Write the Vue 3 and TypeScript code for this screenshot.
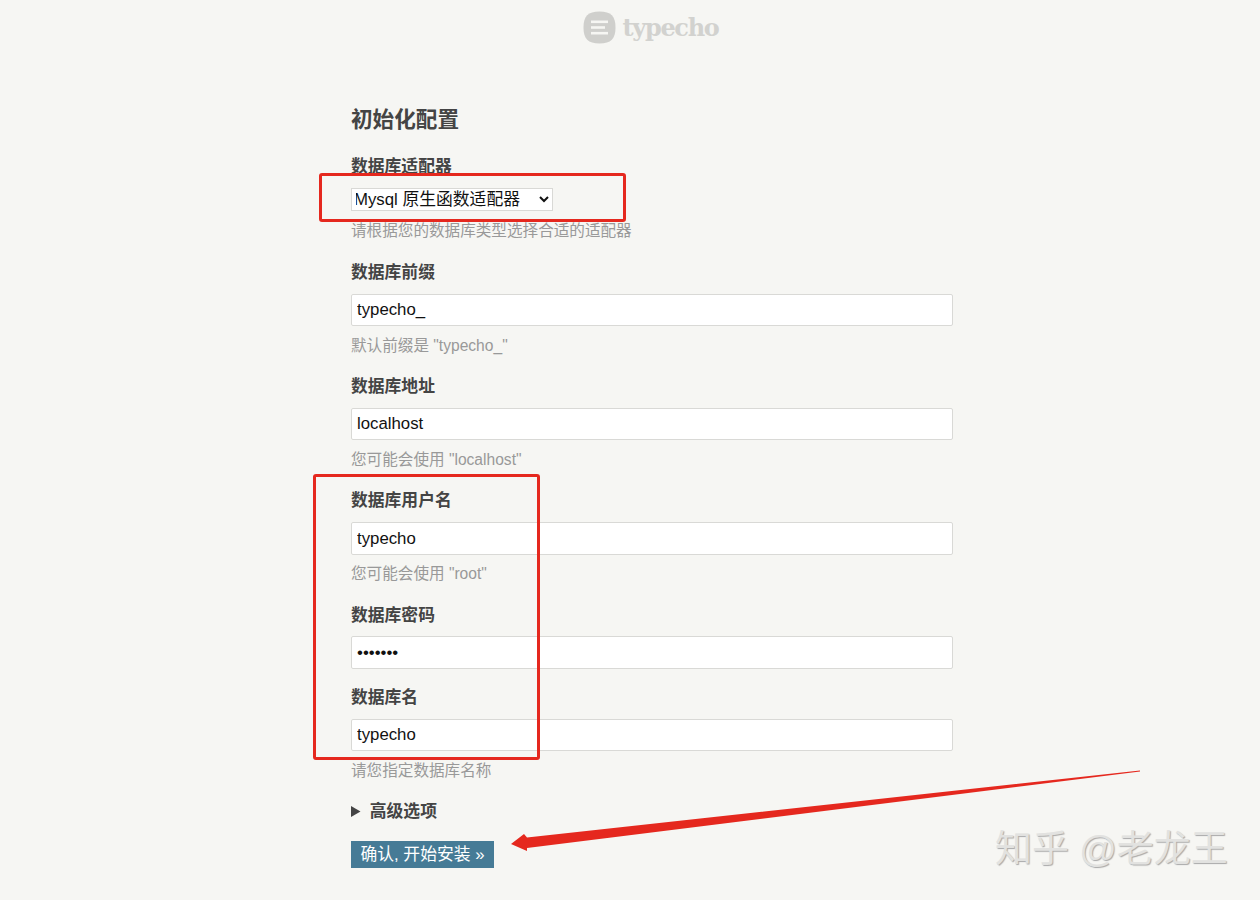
<template>
  <div class="install-page">
    <header class="logo">
      <svg class="logo-icon" width="33" height="33" viewBox="0 0 33 33">
        <path d="M16.5 0.5C28 0.5 32.5 5 32.5 16.5S28 32.5 16.5 32.5S0.5 28 0.5 16.5S5 0.5 16.5 0.5Z" fill="#cfcfcc" />
        <rect x="8" y="9.5" width="17" height="2.6" fill="#f6f6f3" />
        <rect x="8" y="15.2" width="14" height="2.6" fill="#f6f6f3" />
        <rect x="8" y="20.9" width="17" height="2.6" fill="#f6f6f3" />
      </svg>
      <span class="logo-text">typecho</span>
    </header>

    <form class="form" @submit.prevent>
      <h1>初始化配置</h1>

      <div class="field first">
        <label>数据库适配器</label>
        <select v-model="adapter">
          <option>Mysql 原生函数适配器</option>
        </select>
        <p class="desc">请根据您的数据库类型选择合适的适配器</p>
      </div>

      <div v-for="f in fields" :key="f.label" class="field" :class="f.cls">
        <label>{{ f.label }}</label>
        <input v-model="f.value" :type="f.type || 'text'" />
        <p v-if="f.desc" class="desc">{{ f.desc }}</p>
      </div>

      <details class="advanced">
        <summary><span>高级选项</span></summary>
      </details>

      <button type="submit">确认, 开始安装 »</button>
    </form>

    <!-- annotations drawn over the screenshot -->
    <div class="mark mark-adapter"></div>
    <div class="mark mark-user"></div>
    <svg class="arrow" width="1260" height="900" viewBox="0 0 1260 900">
      <polygon points="1140,770.5 527,837.5 524,834 511,844 527,851 527,848 1140,771.5" fill="#e5281e" />
    </svg>
    <div class="watermark">知乎 @老龙王</div>
  </div>
</template>

<script setup lang="ts">
import { ref } from "vue";

interface Field {
  label: string;
  value: string;
  desc?: string;
  type?: string;
  cls?: string;
}

const adapter = ref("Mysql 原生函数适配器");

const fields = ref<Field[]>([
  { label: "数据库前缀", value: "typecho_", desc: '默认前缀是 "typecho_"' },
  { label: "数据库地址", value: "localhost", desc: '您可能会使用 "localhost"' },
  { label: "数据库用户名", value: "typecho", desc: '您可能会使用 "root"', cls: "user" },
  { label: "数据库密码", value: "1234567", type: "password", cls: "password" },
  { label: "数据库名", value: "typecho", desc: "请您指定数据库名称", cls: "name" },
]);
</script>

<style>
body {
  background: #f6f6f3;
}
</style>

<style scoped>
.install-page {
  position: relative;
  height: 900px;
  overflow: hidden;
  background: #f6f6f3;
  color: #444;
  font-family: "Liberation Sans", "Noto Sans CJK SC", sans-serif;
  font-size: 16.8px;
}

.logo {
  display: flex;
  align-items: center;
  justify-content: center;
  gap: 6px;
  height: 33px;
  padding-top: 11px;
  padding-left: 42px;
}
.logo-text {
  font-family: "DejaVu Serif", serif;
  font-weight: bold;
  font-size: 24px;
  letter-spacing: -1.3px;
  color: #d2d2cf;
}

.form {
  width: 602px;
  margin: 60px 0 0 351px;
}
h1 {
  margin: 0 0 18px;
  font-size: 21.6px;
  line-height: 32px;
  font-weight: bold;
}

.field {
  margin-bottom: 16px;
}
.field.first,
.field.user,
.field.name {
  margin-bottom: 17px;
}
.field label {
  display: block;
  font-weight: bold;
  line-height: 24px;
  padding-top: 1px;
  margin-bottom: 9px;
}
.field.password label {
  margin-bottom: 8px;
}
.field input {
  display: block;
  box-sizing: border-box;
  width: 100%;
  height: 32px;
  padding: 0 5px;
  border: 1px solid #d9d9d6;
  border-radius: 2px;
  background: #fff;
  color: #111;
  font: inherit;
  outline: none;
}
.field.user input,
.field.password input {
  height: 33px;
}
.field.user .desc {
  margin-top: 7px;
}
.field select {
  display: block;
  box-sizing: border-box;
  width: 202px;
  height: 23px;
  padding: 0;
  border: 1px solid #d9d9d6;
  background: #fff;
  color: #111;
  font: inherit;
  text-indent: -2px;
}
.desc {
  margin: 8px 0 0;
  font-size: 15.6px;
  line-height: 24px;
  color: #999;
}

.advanced {
  font-weight: bold;
  line-height: 24px;
}
.advanced summary {
  cursor: pointer;
}
.advanced summary span {
  margin-left: 1px;
}

button {
  display: block;
  box-sizing: border-box;
  height: 27px;
  width: 143px;
  margin-top: 17px;
  padding: 0;
  border: 0;
  background: #467b96;
  color: #fff;
  font: inherit;
  line-height: 27px;
  cursor: pointer;
}

.mark {
  position: absolute;
  box-sizing: border-box;
  border: 3px solid #e5281e;
  border-radius: 3px;
}
.mark-adapter {
  left: 319px;
  top: 173px;
  width: 307px;
  height: 49px;
}
.mark-user {
  left: 313px;
  top: 474px;
  width: 227px;
  height: 286px;
}
.arrow {
  position: absolute;
  left: 0;
  top: 0;
  pointer-events: none;
}
.watermark {
  position: absolute;
  left: 995px;
  top: 823px;
  font-size: 37px;
  line-height: 54px;
  white-space: nowrap;
  font-family: "Liberation Sans", "Noto Sans CJK SC", sans-serif;
  color: #e2e2e0;
  text-shadow: 1px 1px 1px #a9a9a9;
}
</style>
